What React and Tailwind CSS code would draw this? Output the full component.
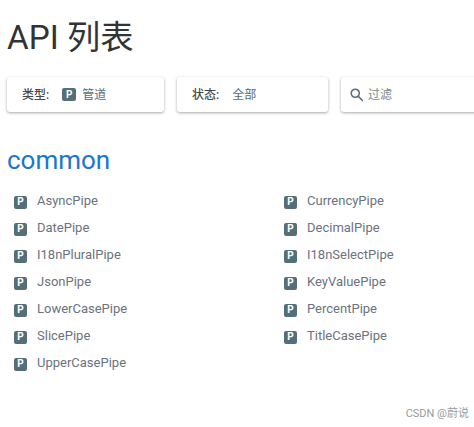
const font = { fontFamily: 'Roboto, "Noto Sans CJK SC", sans-serif' };

function Badge({ className = "" }) {
  return (
    <span className={`flex h-[13px] shrink-0 items-center justify-center rounded-[2px] bg-[#546e7a] text-[10px] font-bold leading-none text-white ${className}`}>
      P
    </span>
  );
}

function Item({ name }) {
  return (
    <li className="flex h-[27px] items-center">
      <Badge className="ml-[7px] mr-[10px] mt-[1px] w-[13px]" />
      <span className="mb-[1px] text-[13px] leading-[26px] text-[#6b7280]">{name}</span>
    </li>
  );
}

const card = "flex h-[35px] shrink-0 items-center rounded-[3px] bg-white shadow-[0_1px_3px_rgba(0,0,0,0.35)]";

const left = ["AsyncPipe", "DatePipe", "I18nPluralPipe", "JsonPipe", "LowerCasePipe", "SlicePipe", "UpperCasePipe"];
const right = ["CurrencyPipe", "DecimalPipe", "I18nSelectPipe", "KeyValuePipe", "PercentPipe", "TitleCasePipe"];

export default function App() {
  return (
    <div className="relative h-[427px] w-[474px] overflow-hidden bg-white" style={font}>
      <div className="pl-[7px] pt-[14px]">
        <h1 className="text-[33.25px] font-normal leading-[48px] text-[#333333]">API 列表</h1>
        <div className="mt-[15px] flex gap-[13px]">
          <div className={`${card} w-[157px] pl-[15px]`}>
            <span className="text-[12px] font-medium text-[#444b50]">类型:</span>
            <Badge className="ml-[13px] mr-[6px] w-[14px]" />
            <span className="text-[12px] text-[#546e7a]">管道</span>
          </div>
          <div className={`${card} w-[151px] pl-[15px]`}>
            <span className="text-[12px] font-medium text-[#444b50]">状态:</span>
            <span className="ml-[13px] text-[12px] text-[#546e7a]">全部</span>
          </div>
          <div className={`${card} w-[160px] pl-[8px]`}>
            <svg width="15" height="15" viewBox="0 0 24 24" fill="none" stroke="#546e7a" strokeWidth="2.4" strokeLinecap="round">
              <circle cx="10" cy="10" r="6.5" />
              <path d="M15 15l6.5 6.5" />
            </svg>
            <span className="ml-[4px] text-[12px] text-[#78868e]">过滤</span>
          </div>
        </div>
        <h2 className="mt-[30px] text-[26px] font-normal leading-[36px] text-[#1976d2]">common</h2>
        <div className="mt-[10px] flex">
          <ul className="w-[270px]">{left.map((n) => <Item key={n} name={n} />)}</ul>
          <ul className="w-[190px]">{right.map((n) => <Item key={n} name={n} />)}</ul>
        </div>
      </div>
      <div className="absolute bottom-[5px] right-[5px] text-[11px] text-[#9a9a9a]">CSDN @蔚说</div>
    </div>
  );
}
